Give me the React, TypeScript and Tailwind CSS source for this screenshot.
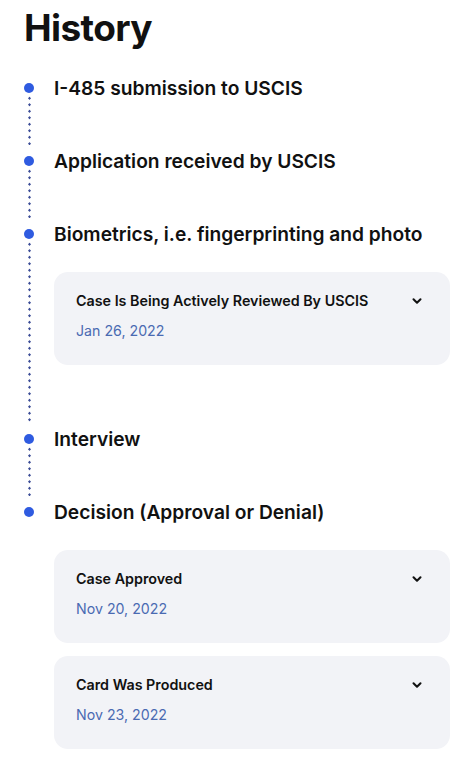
import { ChevronDown } from "lucide-react";

interface Update {
  title: string;
  date: string;
}

interface Step {
  label: string;
  updates?: Update[];
}

const steps: Step[] = [
  { label: "I-485 submission to USCIS" },
  { label: "Application received by USCIS" },
  {
    label: "Biometrics, i.e. fingerprinting and photo",
    updates: [{ title: "Case Is Being Actively Reviewed By USCIS", date: "Jan 26, 2022" }],
  },
  { label: "Interview" },
  {
    label: "Decision (Approval or Denial)",
    updates: [
      { title: "Case Approved", date: "Nov 20, 2022" },
      { title: "Card Was Produced", date: "Nov 23, 2022" },
    ],
  },
];

const UpdateCard: React.FC<{ update: Update }> = ({ update }) => (
  <div className="rounded-[14px] bg-[#f2f3f7] pl-[22px] pr-[26px] pt-[20px] pb-[24px]">
    <div className="flex items-center justify-between">
      <span className="text-[14.3px] font-semibold leading-[18px] text-[#111]">{update.title}</span>
      <ChevronDown className="h-[14px] w-[14px] text-[#111]" strokeWidth={3.5} />
    </div>
    <div className="mt-[11px] text-[14.2px] leading-[20px] text-[#4a6ab2]">{update.date}</div>
  </div>
);

export default function App() {
  return (
    <div className="min-h-screen bg-white px-[24px] pt-[6px] font-['Inter',sans-serif] text-[#111]">
      <h1 className="text-[37px] font-bold leading-[44px] tracking-[-0.6px]">History</h1>
      <div className="mt-[24px]">
        {steps.map((step, i) => {
          const last = i === steps.length - 1;
          return (
            <div key={step.label} className="flex">
              <div className="flex w-[10px] flex-col items-center">
                <div className="mt-[9px] h-[10px] w-[10px] shrink-0 rounded-full bg-[#2f5be0]" />
                {!last && (
                  <div className="my-[2px] w-[3px] flex-1 bg-[radial-gradient(circle,#3b4c96_1px,transparent_1.4px)] bg-[length:3px_6.5px] bg-repeat-y" />
                )}
              </div>
              <div className={`ml-[20px] flex-1 ${last ? "pb-0" : step.updates ? "pb-[60px]" : "pb-[45px]"}`}>
                <div className="text-[19.2px] font-semibold leading-[28px]">{step.label}</div>
                {step.updates && (
                  <div className="mt-[24px] flex flex-col gap-[13px]">
                    {step.updates.map((u) => (
                      <UpdateCard key={u.title} update={u} />
                    ))}
                  </div>
                )}
              </div>
            </div>
          );
        })}
      </div>
    </div>
  );
}
